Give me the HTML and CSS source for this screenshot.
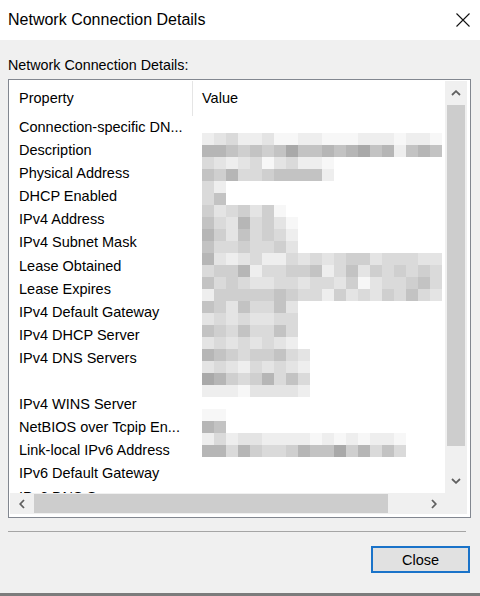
FILE: index.html
```html
<!DOCTYPE html>
<html>
<head>
<meta charset="utf-8">
<title>Network Connection Details</title>
<link rel="stylesheet" href="styles.css">
</head>
<body>
<div class="window">
  <div class="titlebar">
    <span class="title">Network Connection Details</span>
    <svg class="close-x" viewBox="0 0 14 14" width="14" height="14"><path d="M0.5 0.5 L13.5 13.5 M13.5 0.5 L0.5 13.5" stroke="#111" stroke-width="1.1" fill="none"/></svg>
  </div>
  <div class="body">
    <div class="label">Network Connection Details:</div>
    <div class="listbox">
      <div class="viewport">
        <div class="header">
          <div class="hcell hprop">Property</div>
          <div class="hcell hval">Value</div>
        </div>
        <div class="rows">
          <div class="row">Connection-specific DN...</div>
          <div class="row">Description</div>
          <div class="row">Physical Address</div>
          <div class="row">DHCP Enabled</div>
          <div class="row">IPv4 Address</div>
          <div class="row">IPv4 Subnet Mask</div>
          <div class="row">Lease Obtained</div>
          <div class="row">Lease Expires</div>
          <div class="row">IPv4 Default Gateway</div>
          <div class="row">IPv4 DHCP Server</div>
          <div class="row">IPv4 DNS Servers</div>
          <div class="row">&nbsp;</div>
          <div class="row">IPv4 WINS Server</div>
          <div class="row">NetBIOS over Tcpip En...</div>
          <div class="row">Link-local IPv6 Address</div>
          <div class="row">IPv6 Default Gateway</div>
          <div class="row">IPv6 DNS Servers</div>
        </div>
        <div class="mosaic" id="mosaic"></div>
      </div>
      <div class="vscroll">
        <div class="sbtn">
          <svg viewBox="0 0 10 6" width="10" height="6"><polyline points="1,5 5,1.2 9,5" fill="none" stroke="#606060" stroke-width="1.8"/></svg>
        </div>
        <div class="vtrack"><div class="vthumb"></div></div>
        <div class="sbtn">
          <svg viewBox="0 0 10 6" width="10" height="6"><polyline points="1,1 5,4.8 9,1" fill="none" stroke="#606060" stroke-width="1.8"/></svg>
        </div>
      </div>
      <div class="hscroll">
        <div class="hbtn">
          <svg viewBox="0 0 6 10" width="6" height="10"><polyline points="5,1 1.2,5 5,9" fill="none" stroke="#606060" stroke-width="1.8"/></svg>
        </div>
        <div class="htrack"><div class="hthumb"></div></div>
        <div class="hbtn">
          <svg viewBox="0 0 6 10" width="6" height="10"><polyline points="1,1 4.8,5 1,9" fill="none" stroke="#606060" stroke-width="1.8"/></svg>
        </div>
      </div>
      <div class="corner"></div>
    </div>
    <div class="sep"></div>
    <div class="actions"><button class="btn">Close</button></div>
  </div>
</div>
<script src="app.js"></script>
</body>
</html>
```

FILE: styles.css
```css
html, body {
  margin: 0;
  padding: 0;
  height: 596px;
  overflow: hidden;
}
body {
  font-family: "Liberation Sans", Arial, sans-serif;
  font-size: 14.5px;
  color: #000;
  background: #f0f0f0;
}
.window {
  height: 596px;
  box-sizing: border-box;
  border-bottom: 3px solid #7c7c7c;
  display: flex;
  flex-direction: column;
}
.titlebar {
  height: 40px;
  flex: none;
  background: #fff;
  display: flex;
  align-items: center;
  justify-content: space-between;
  padding: 0 10px 0 8px;
}
.title {
  font-size: 16px;
  color: #000;
}
.close-x {
  display: block;
  margin-top: -1px;
}
.body {
  flex: 1;
  display: flex;
  flex-direction: column;
  padding: 0 8px;
}
.label {
  padding-top: 17px;
  height: 22px;
  line-height: 17px;
  font-size: 14.3px;
}
.listbox {
  height: 439px;
  box-sizing: border-box;
  margin-right: 1px;
  border: 1px solid #828790;
  background: #fff;
  padding: 1px 3px 3px 1px;
  display: grid;
  grid-template-columns: 1fr 22px;
  grid-template-rows: 1fr 21px;
}
.viewport {
  position: relative;
  overflow: hidden;
  background: #fff;
}
.header {
  height: 35px;
  display: flex;
}
.hcell {
  line-height: 35px;
  padding-left: 9px;
}
.hprop {
  width: 173px;
  border-right: 1px solid #e5e5e5;
}
.row {
  height: 23.1px;
  line-height: 23.1px;
  padding-left: 9px;
  white-space: nowrap;
}
.mosaic {
  position: absolute;
  left: 192px;
  top: 52px;
  filter: blur(0.4px);
}
.strip {
  display: flex;
  height: 12px;
}
.cell {
  width: 12px;
  height: 12px;
  flex: none;
}
.c-a { background: #a9a9a9; }
.c-b { background: #b6b6b6; }
.c-c { background: #c3c3c3; }
.c-d { background: #cfcfcf; }
.c-e { background: #dadada; }
.c-f { background: #e4e4e4; }
.c-g { background: #eeeeee; }
.c-h { background: #f7f7f7; }

.vscroll {
  background: #f0f0f0;
  display: flex;
  flex-direction: column;
}
.sbtn {
  height: 24px;
  flex: none;
  display: flex;
  align-items: center;
  justify-content: center;
}
.vtrack {
  flex: 1;
  display: flex;
  flex-direction: column;
  padding: 0 2px;
}
.vthumb {
  height: 341px;
  background: #cdcdcd;
}
.hscroll {
  background: #f0f0f0;
  display: flex;
}
.hbtn {
  width: 23px;
  flex: none;
  display: flex;
  align-items: center;
  justify-content: center;
}
.htrack {
  flex: 1;
  display: flex;
  padding: 1px 0 1px 1px;
}
.hthumb {
  width: 354px;
  background: #cdcdcd;
}
.corner {
  background: #f0f0f0;
}
.sep {
  margin-top: 13px;
  margin-right: 6px;
  height: 0;
  border-top: 1px solid #a5a5a5;
}
.actions {
  margin-top: 14px;
  display: flex;
  justify-content: flex-end;
  padding-right: 2px;
}
.btn {
  width: 99px;
  height: 27px;
  box-sizing: border-box;
  border: 2px solid #1a73c9;
  background: #e1e1e1;
  font-family: "Liberation Sans", Arial, sans-serif;
  font-size: 14.5px;
  color: #000;
  padding: 0;
}
```

FILE: app.js
```js
var strips = [
  "gfeggfhhgghhhggghggh",
  "bbcdcdcaccbcbacbgcbc",
  "efgfehfeggh",
  "cdbeedccccg",
  "eg",
  "ec",
  "dfedfdh",
  "cefbedfh",
  "bdfcedeg",
  "ceedeedf",
  "bfgfeggefefeddfeeeff",
  "eddbgeeddcgecfdedede",
  "cedeffeefeefdhfeedce",
  "gdddddcdeegdfefdecef",
  "cdfceecf",
  "fefeffee",
  "cdeceece",
  "fefefefg",
  "bcdeddcef",
  "fefgefefg",
  "abdedbece",
  "ggghffffg",
  "",
  "hh",
  "bc",
  "gegffgggghghghggh",
  "bbebdeedbccadbece"
];
var mosaic = document.getElementById("mosaic");
strips.forEach(function (s) {
  var row = document.createElement("div");
  row.className = "strip";
  for (var i = 0; i < s.length; i++) {
    var cell = document.createElement("span");
    cell.className = "cell c-" + s.charAt(i);
    row.appendChild(cell);
  }
  mosaic.appendChild(row);
});
```
